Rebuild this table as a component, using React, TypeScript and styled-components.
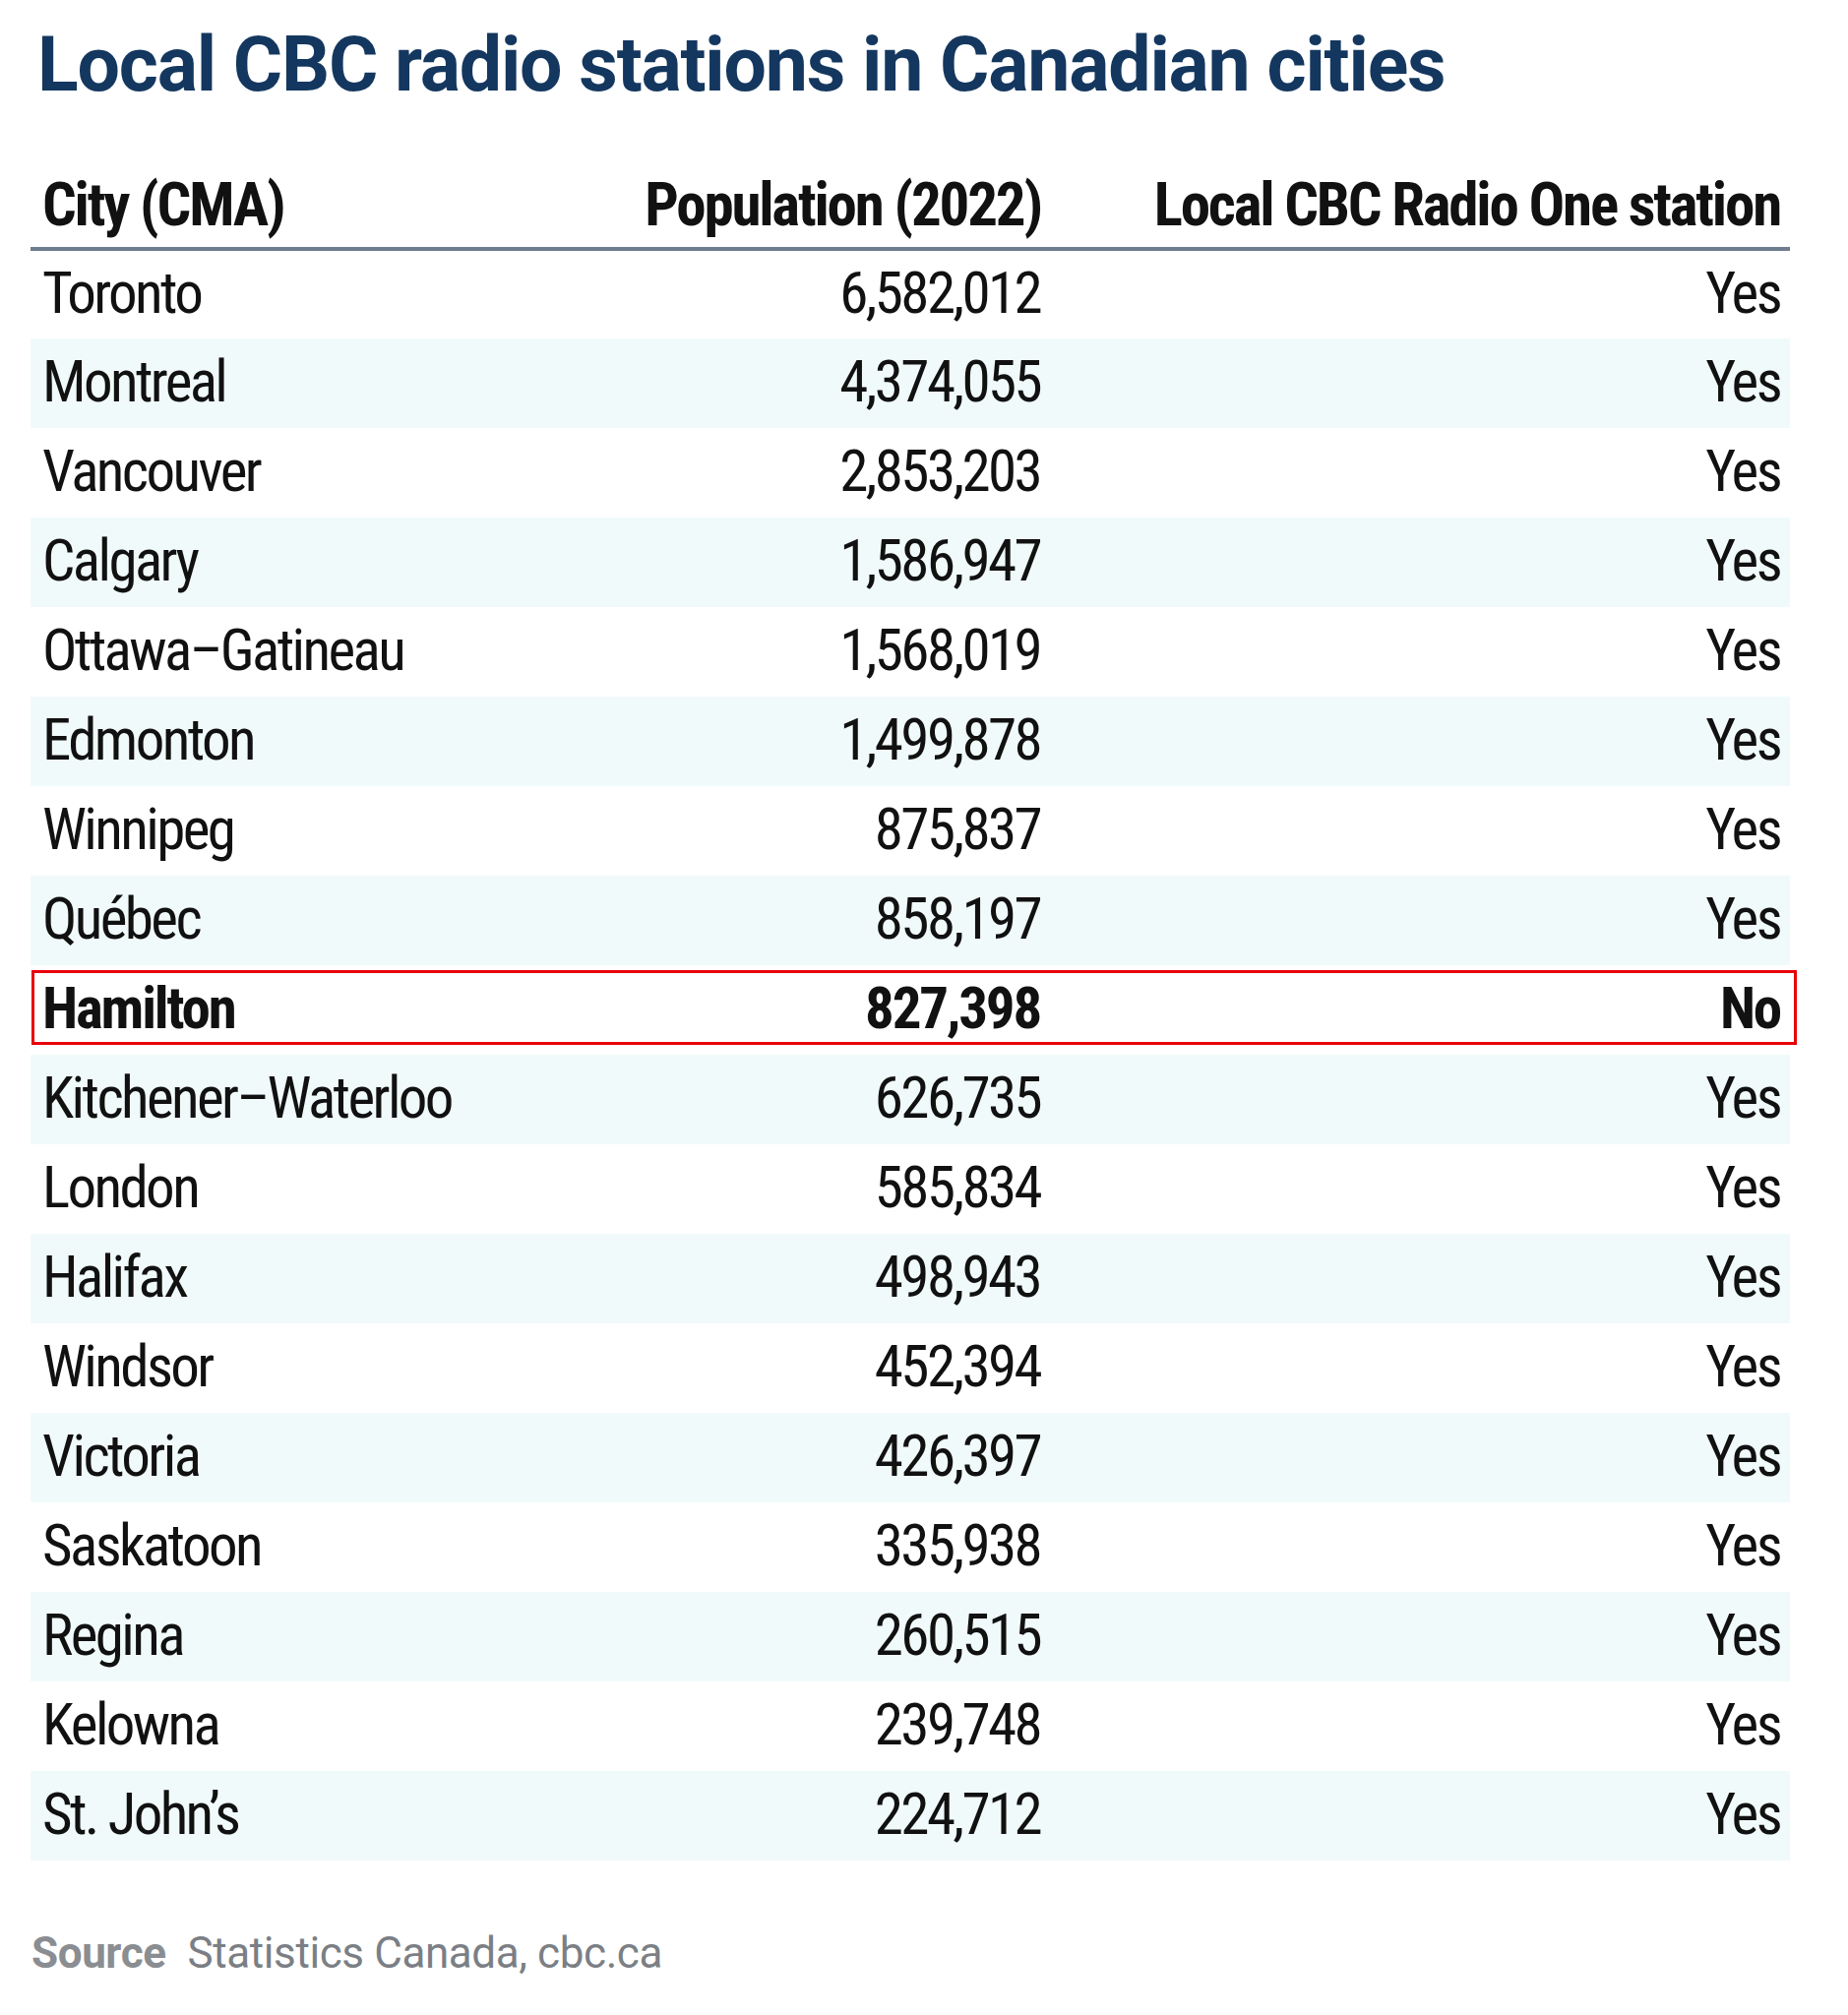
import React from "react";
import styled, { createGlobalStyle } from "styled-components";

const Global = createGlobalStyle`
  html, body { margin: 0; padding: 0; background: #ffffff; }
  body { font-family: "Roboto Condensed", "Liberation Sans Narrow", "Noto Sans", sans-serif; }
`;

const Page = styled.div`
  width: 1878px;
  height: 2048px;
  box-sizing: border-box;
  padding: 20px 0 0 31px;
  display: flex;
  flex-direction: column;
`;

const Title = styled.h1`
  margin: 0;
  font-family: Roboto, "Liberation Sans", sans-serif;
  font-weight: 700;
  font-size: 77px;
  letter-spacing: -1.2px;
  line-height: 92px;
  color: #14375f;
  padding-left: 7px;
`;

const Table = styled.table`
  margin-top: 66px;
  width: 1788px;
  border-collapse: collapse;
  table-layout: fixed;
`;

const HeadCell = styled.th<{ $align: "left" | "right" }>`
  font-weight: 700;
  font-size: 61px;
  letter-spacing: -2.2px;
  line-height: 1;
  color: #111111;
  text-align: ${(p) => p.$align};
  padding: 0 ${(p) => (p.$align === "right" ? "10px" : "0")} 12px ${(p) => (p.$align === "left" ? "12px" : "0")};
  border-bottom: 4px solid #6d7d8d;
  white-space: nowrap;
`;

const Row = styled.tr<{ $shaded: boolean }>`
  height: 91px;
  background: ${(p) => (p.$shaded ? "#f1fafa" : "#ffffff")};
`;

const Cell = styled.td<{ $align: "left" | "right"; $bold: boolean; $pr?: number }>`
  position: relative;
  font-size: 59px;
  letter-spacing: ${(p) => (p.$bold ? "-2.2px" : "-2.6px")};
  line-height: 1;
  font-weight: ${(p) => (p.$bold ? 700 : 400)};
  color: #111111;
  text-align: ${(p) => p.$align};
  padding: 0 ${(p) => (p.$align === "right" ? `${p.$pr ?? 10}px` : "0")} 4px ${(p) => (p.$align === "left" ? "12px" : "0")};
  vertical-align: middle;
  white-space: nowrap;
`;

const Highlight = styled.div`
  position: absolute;
  left: 1px;
  top: 5px;
  height: 76px;
  width: 1794px;
  box-sizing: border-box;
  border: 3px solid #e8000b;
  pointer-events: none;
`;

const Source = styled.p`
  margin: 72px 0 0 0;
  font-family: Roboto, "Liberation Sans", sans-serif;
  font-size: 44px;
  letter-spacing: -0.4px;
  line-height: 1;
  color: #7b7f85;
  padding-left: 1px;
`;

const SourceLabel = styled.span`
  font-weight: 700;
  color: #8a8d91;
  margin-right: 22px;
`;

type Entry = { city: string; pop: string; station: string };

const data: Entry[] = [
  { city: "Toronto", pop: "6,582,012", station: "Yes" },
  { city: "Montreal", pop: "4,374,055", station: "Yes" },
  { city: "Vancouver", pop: "2,853,203", station: "Yes" },
  { city: "Calgary", pop: "1,586,947", station: "Yes" },
  { city: "Ottawa–Gatineau", pop: "1,568,019", station: "Yes" },
  { city: "Edmonton", pop: "1,499,878", station: "Yes" },
  { city: "Winnipeg", pop: "875,837", station: "Yes" },
  { city: "Québec", pop: "858,197", station: "Yes" },
  { city: "Hamilton", pop: "827,398", station: "No" },
  { city: "Kitchener–Waterloo", pop: "626,735", station: "Yes" },
  { city: "London", pop: "585,834", station: "Yes" },
  { city: "Halifax", pop: "498,943", station: "Yes" },
  { city: "Windsor", pop: "452,394", station: "Yes" },
  { city: "Victoria", pop: "426,397", station: "Yes" },
  { city: "Saskatoon", pop: "335,938", station: "Yes" },
  { city: "Regina", pop: "260,515", station: "Yes" },
  { city: "Kelowna", pop: "239,748", station: "Yes" },
  { city: "St. John’s", pop: "224,712", station: "Yes" },
];

export default function App() {
  return (
    <>
      <Global />
      <Page>
        <Title>Local CBC radio stations in Canadian cities</Title>
        <Table>
          <colgroup>
            <col style={{ width: "620px" }} />
            <col style={{ width: "417px" }} />
            <col style={{ width: "751px" }} />
          </colgroup>
          <thead>
            <tr>
              <HeadCell $align="left">City (CMA)</HeadCell>
              <HeadCell $align="right">Population (2022)</HeadCell>
              <HeadCell $align="right">Local CBC Radio One station</HeadCell>
            </tr>
          </thead>
          <tbody>
            {data.map((d, i) => {
              const hl = d.station === "No";
              return (
                <Row key={d.city} $shaded={i % 2 === 1}>
                  <Cell $align="left" $bold={hl}>
                    {hl && <Highlight />}
                    {d.city}
                  </Cell>
                  <Cell $align="right" $bold={hl} $pr={11}>{d.pop}</Cell>
                  <Cell $align="right" $bold={hl} $pr={10}>{d.station}</Cell>
                </Row>
              );
            })}
          </tbody>
        </Table>
        <Source>
          <SourceLabel>Source</SourceLabel>Statistics Canada, cbc.ca
        </Source>
      </Page>
    </>
  );
}
